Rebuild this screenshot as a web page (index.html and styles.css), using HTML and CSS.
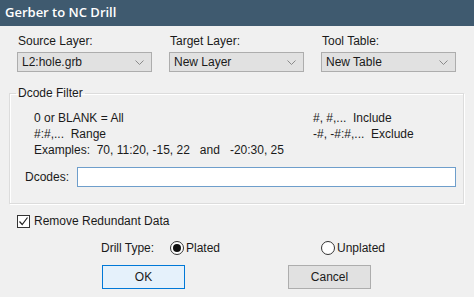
FILE: index.html
```html
<!DOCTYPE html>
<html lang="en">
<head>
    <meta charset="UTF-8">
    <meta name="viewport" content="width=device-width, initial-scale=1.0">
    <title>Gerber to NC Drill</title>
    <link rel="stylesheet" href="styles.css">
</head>
<body>
    <div class="window">
        <div class="titlebar">Gerber to NC Drill</div>

        <div class="dialog">
            <div class="select-row">
                <div class="field">
                    <label>Source Layer:</label>
                    <div class="combo">
                        <span>L2:hole.grb</span>
                        <svg class="chevron" width="9" height="5" viewBox="0 0 9 5"><path d="M0.5 0.5 L4.5 4.5 L8.5 0.5" fill="none" stroke="#8a8a8a" stroke-width="1"/></svg>
                    </div>
                </div>
                <div class="field">
                    <label>Target Layer:</label>
                    <div class="combo">
                        <span>New Layer</span>
                        <svg class="chevron" width="9" height="5" viewBox="0 0 9 5"><path d="M0.5 0.5 L4.5 4.5 L8.5 0.5" fill="none" stroke="#8a8a8a" stroke-width="1"/></svg>
                    </div>
                </div>
                <div class="field">
                    <label>Tool Table:</label>
                    <div class="combo">
                        <span>New Table</span>
                        <svg class="chevron" width="9" height="5" viewBox="0 0 9 5"><path d="M0.5 0.5 L4.5 4.5 L8.5 0.5" fill="none" stroke="#8a8a8a" stroke-width="1"/></svg>
                    </div>
                </div>
            </div>

            <fieldset class="group">
                <legend>Dcode Filter</legend>
                <div class="help">
                    <span>0 or BLANK = All</span>
                    <span>#, #,...&nbsp; Include</span>
                    <span>#:#,...&nbsp; Range</span>
                    <span>-#, -#:#,...&nbsp; Exclude</span>
                    <span class="wide">Examples:&nbsp; 70, 11:20, -15, 22 &nbsp; and &nbsp; -20:30, 25</span>
                </div>
                <div class="dcodes">
                    <label>Dcodes:</label>
                    <div class="textbox"></div>
                </div>
            </fieldset>

            <div class="check-row">
                <span class="checkbox">
                    <svg width="11" height="11" viewBox="0 0 11 11"><path d="M1.5 5.5 L4.2 8.5 L9.5 1.5" fill="none" stroke="#222" stroke-width="1.2"/></svg>
                </span>
                <span>Remove Redundant Data</span>
            </div>

            <div class="drill-row">
                <span class="drill-label">Drill Type:</span>
                <span class="option plated">
                    <span class="radio checked"></span>
                    <span>Plated</span>
                </span>
                <span class="option">
                    <span class="radio"></span>
                    <span>Unplated</span>
                </span>
            </div>

            <div class="button-row">
                <div class="button default">OK</div>
                <div class="button">Cancel</div>
            </div>
        </div>
    </div>
</body>
</html>
```

FILE: styles.css
```css
* {
    margin: 0;
    padding: 0;
    box-sizing: border-box;
}

body {
    font-family: 'Liberation Sans', Arial, sans-serif;
    font-size: 12px;
    color: #1a1a1a;
    background: #f0f0f0;
}

.window {
    width: 474px;
    height: 297px;
    background: #f0f0f0;
    overflow: hidden;
}

.titlebar {
    height: 26px;
    line-height: 25px;
    padding-left: 5px;
    background: #3f5a6f;
    color: #fff;
    font-family: 'Open Sans', sans-serif;
    font-weight: 600;
    font-size: 13px;
}

.dialog {
    padding: 8px 0 0 0;
}

.select-row {
    display: flex;
    gap: 17px;
    padding-left: 17px;
}

.field label {
    display: block;
    line-height: 14px;
    padding-left: 1px;
    margin-bottom: 4px;
}

.combo {
    width: 135px;
    height: 20px;
    background: #e1e1e1;
    border: 1px solid #adadad;
    display: flex;
    align-items: center;
    justify-content: space-between;
    padding: 0 7px 0 4px;
}

.chevron {
    display: block;
}

.group {
    margin: 14px 0 0 9px;
    width: 455px;
    height: 118px;
    border: 1px solid #dcdcdc;
    box-shadow: inset 1px 1px 0 #fff, 1px 1px 0 #fff;
    padding: 0;
}

.group legend {
    margin-left: 6px;
    padding: 0 2px;
    line-height: 14px;
}

.help {
    display: grid;
    grid-template-columns: 279px auto;
    row-gap: 2px;
    padding: 11px 0 0 24px;
    line-height: 14px;
}

.help .wide {
    grid-column: 1 / 3;
}

.dcodes {
    display: flex;
    align-items: center;
    margin-top: 10px;
    padding-left: 15px;
}

.dcodes label {
    width: 52px;
}

.textbox {
    width: 379px;
    height: 20px;
    background: #fff;
    border: 1px solid #6e9ecb;
}

.check-row {
    display: flex;
    align-items: center;
    gap: 4px;
    margin: 10px 0 0 17px;
    height: 14px;
}

.checkbox {
    width: 13px;
    height: 13px;
    border: 1px solid #333;
    background: #fff;
    display: flex;
    align-items: center;
    justify-content: center;
}

.checkbox svg {
    display: block;
}

.drill-row {
    display: flex;
    align-items: center;
    margin: 12px 0 0 101px;
    height: 15px;
}

.drill-label {
    width: 69px;
}

.option {
    display: flex;
    align-items: center;
    gap: 2px;
}

.option.plated {
    width: 151px;
}

.radio {
    width: 14px;
    height: 14px;
    border: 1px solid #333;
    border-radius: 50%;
    background: #fff;
    position: relative;
}

.radio.checked::after {
    content: '';
    position: absolute;
    left: 2px;
    top: 2px;
    width: 8px;
    height: 8px;
    border-radius: 50%;
    background: #111;
}

.button-row {
    display: flex;
    gap: 103px;
    margin: 10px 0 0 102px;
}

.button {
    width: 83px;
    height: 24px;
    line-height: 22px;
    text-align: center;
    background: #e1e1e1;
    border: 1px solid #adadad;
}

.button.default {
    background: #e5f1fb;
    border-color: #0078d7;
}
```
